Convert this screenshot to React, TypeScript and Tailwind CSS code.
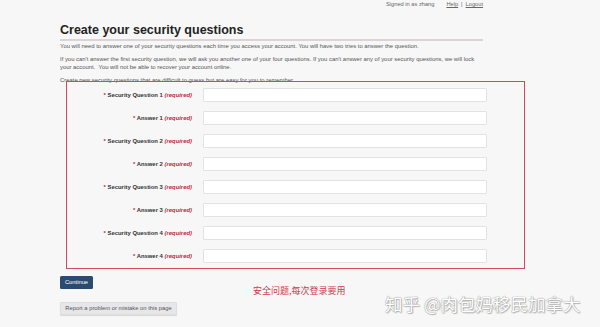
const rows = [
  'Security Question 1',
  'Answer 1',
  'Security Question 2',
  'Answer 2',
  'Security Question 3',
  'Answer 3',
  'Security Question 4',
  'Answer 4',
]

export default function App() {
  return (
    <div className="relative h-[327px] w-[600px] overflow-hidden bg-[#f7f7f7] font-['Liberation_Sans',Arial,sans-serif]">
      <div className="ml-[60px] w-[423px]">
        <div className="flex h-[8px] items-center justify-end text-[5.7px] leading-[8px] text-[#666]">
          <span>Signed in as zhang</span>
          <span className="ml-[12px] underline">Help</span>
          <span className="mx-[3px]">|</span>
          <span className="underline">Logout</span>
        </div>

        <h1 className="mt-[14.5px] text-[12.5px] font-bold leading-[15px] text-[#222]">
          Create your security questions
        </h1>
        <div className="mt-[1.5px] h-[1.5px] bg-[#dcd3d6]" />

        <div className="mt-[1px] text-[5.9px] leading-[8px] text-[#555]">
          <p>
            You will need to answer one of your security questions each time you access your account. You will have two
            tries to answer the question.
          </p>
          <p className="mt-[5px]">
            If you can't answer the first security question, we will ask you another one of your four questions. If you
            can't answer any of your security questions, we will lock your account.&nbsp; You will not be able to recover
            your account online.
          </p>
          <p className="mt-[5px]">
            Create new security questions that are difficult to guess but are easy for you to remember.
          </p>
        </div>

        <div className="relative z-10 -mt-[3px] ml-[6px] w-[459px] border-[1.5px] border-[#d04a5e] pt-[6.5px] pb-[5px]">
          <div className="flex flex-col gap-[9px]">
            {rows.map((r) => (
              <div key={r} className="flex items-center">
                <div className="w-[125px] text-right text-[5.9px] font-bold text-[#333]">
                  <span className="text-[#c0283c]">*</span> {r}{' '}
                  <span className="italic text-[#c0283c]">(required)</span>
                </div>
                <div className="ml-[11px] h-[14px] w-[284px] rounded-[1px] border border-[#e2e2e2] bg-white" />
              </div>
            ))}
          </div>
        </div>

        <button className="mt-[7px] flex h-[13px] w-[33px] items-center justify-center rounded-[1.5px] bg-[#2b4a6f] text-[5.8px] text-white">
          Continue
        </button>

        <button className="mt-[12.5px] flex h-[13px] w-[117px] items-center justify-center rounded-[1px] border border-[#dedede] bg-[#e7e7e9] text-[5.8px] text-[#555] shadow-[0_1px_1px_rgba(0,0,0,0.12)]">
          Report a problem or mistake on this page
        </button>
      </div>

      <div className="absolute left-[253px] top-[284px] text-[9px] leading-[14px] text-[#d0394a] font-['Noto_Sans_CJK_SC',sans-serif]">
        安全问题,每次登录要用
      </div>

      <div className="absolute left-[385px] top-[293px] text-[17.5px] leading-[22px] text-white font-['Noto_Sans_CJK_SC',sans-serif] [text-shadow:0_0_1px_#999,0_0_1px_#999,1px_1px_1px_#bbb]">
        知乎 @肉包妈移民加拿大
      </div>
    </div>
  )
}
